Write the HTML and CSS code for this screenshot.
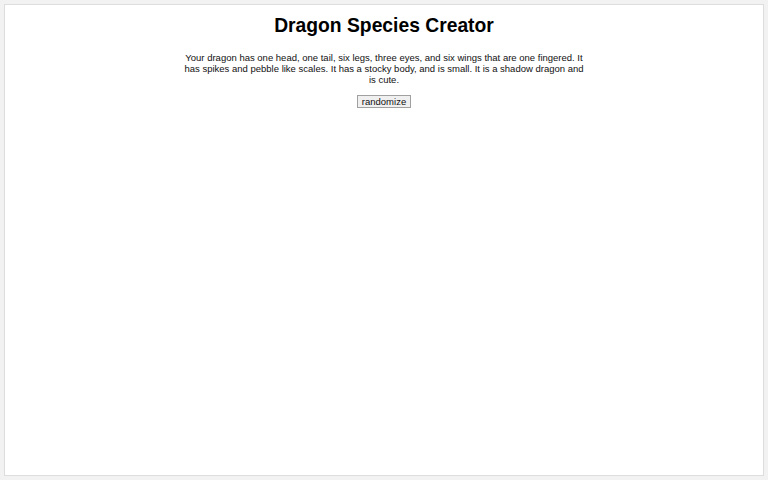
FILE: index.html
```html
<!DOCTYPE html>
<html lang="en">
<head>
	<meta charset="UTF-8">
	<title>Dragon Species Creator</title>
	<link rel="stylesheet" href="styles.css">
</head>
<body>
	<div class="page">
		<h1>Dragon Species Creator</h1>
		<p class="result">Your dragon has one head, one tail, six legs, three eyes, and six wings that are one fingered. It has spikes and pebble like scales. It has a stocky body, and is small. It is a shadow dragon and is cute.</p>
		<button class="randomize">randomize</button>
	</div>
</body>
</html>
```

FILE: styles.css
```css
*{
	margin: 0;
	padding: 0;
}
	body{
		background: #f2f2f2;
		padding: 4px;
		font-family: "Liberation Sans", Arial, sans-serif;
		color: #000;
	}
	.page{
		height: 472px;
		box-sizing: border-box;
		background: #fff;
		border: 1px solid #ddd;
		text-align: center;
	}
	h1{
		font-size: 19.3px;
		margin-top: 9px;
		line-height: 24px;
	}
	.result{
		width: 405px;
		margin: 14px auto 0;
		font-size: 9.5px;
		line-height: 11px;
		color: #111;
	}
	.randomize{
		margin-top: 10px;
		font-family: "Liberation Sans", Arial, sans-serif;
		font-size: 9.5px;
		line-height: 11px;
		padding: 0 4px;
		color: #111;
		background: #f0f0f0;
		border: 1px solid #a0a0a0;
		border-radius: 0;
	}
```
